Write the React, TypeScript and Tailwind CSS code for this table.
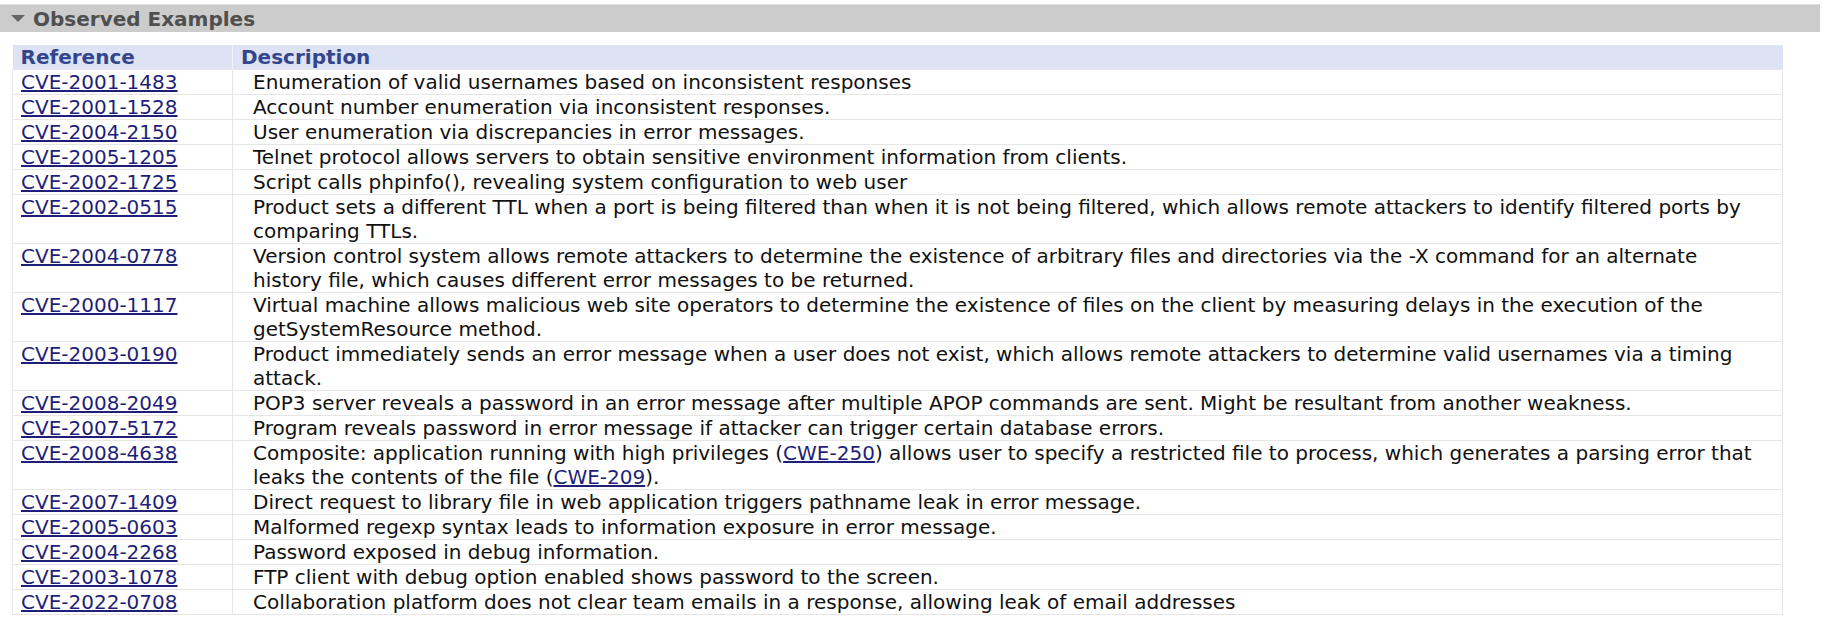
const rows: { id: string; text: React.ReactNode }[] = [
  { id: "CVE-2001-1483", text: "Enumeration of valid usernames based on inconsistent responses" },
  { id: "CVE-2001-1528", text: "Account number enumeration via inconsistent responses." },
  { id: "CVE-2004-2150", text: "User enumeration via discrepancies in error messages." },
  { id: "CVE-2005-1205", text: "Telnet protocol allows servers to obtain sensitive environment information from clients." },
  { id: "CVE-2002-1725", text: "Script calls phpinfo(), revealing system configuration to web user" },
  {
    id: "CVE-2002-0515",
    text: "Product sets a different TTL when a port is being filtered than when it is not being filtered, which allows remote attackers to identify filtered ports by comparing TTLs.",
  },
  {
    id: "CVE-2004-0778",
    text: "Version control system allows remote attackers to determine the existence of arbitrary files and directories via the -X command for an alternate history file, which causes different error messages to be returned.",
  },
  {
    id: "CVE-2000-1117",
    text: "Virtual machine allows malicious web site operators to determine the existence of files on the client by measuring delays in the execution of the getSystemResource method.",
  },
  {
    id: "CVE-2003-0190",
    text: "Product immediately sends an error message when a user does not exist, which allows remote attackers to determine valid usernames via a timing attack.",
  },
  {
    id: "CVE-2008-2049",
    text: "POP3 server reveals a password in an error message after multiple APOP commands are sent. Might be resultant from another weakness.",
  },
  { id: "CVE-2007-5172", text: "Program reveals password in error message if attacker can trigger certain database errors." },
  {
    id: "CVE-2008-4638",
    text: (
      <>
        Composite: application running with high privileges (
        <a href="#" className="text-[#1f1f7a] underline">CWE-250</a>
        ) allows user to specify a restricted file to process, which generates a parsing error that leaks the contents of the file (
        <a href="#" className="text-[#1f1f7a] underline">CWE-209</a>
        ).
      </>
    ),
  },
  { id: "CVE-2007-1409", text: "Direct request to library file in web application triggers pathname leak in error message." },
  { id: "CVE-2005-0603", text: "Malformed regexp syntax leads to information exposure in error message." },
  { id: "CVE-2004-2268", text: "Password exposed in debug information." },
  { id: "CVE-2003-1078", text: "FTP client with debug option enabled shows password to the screen." },
  {
    id: "CVE-2022-0708",
    text: "Collaboration platform does not clear team emails in a response, allowing leak of email addresses",
  },
];

export default function App() {
  return (
    <div className="min-h-[622px] bg-white pt-1 font-['DejaVu_Sans',Verdana,sans-serif] text-[20px]">
      {/* section header bar */}
      <div className="mr-1 flex h-[28px] items-center bg-[#cccccc] border-t border-[#dedede]">
        <svg width="14" height="8" viewBox="0 0 14 8" className="ml-[11px] mr-[8px]">
          <polygon points="0,0 14,0 7,7" fill="#666666" />
        </svg>
        <span className="font-bold leading-[28px] text-[#4f4f4f]">Observed Examples</span>
      </div>

      <div className="ml-[12px] mt-[13px] w-[1771px]">
        <table className="w-full border-collapse">
          <thead>
            <tr className="bg-[#dde3f5]">
              <th className="w-[220px] border-r border-[#eef1fa] pl-2 text-left font-bold leading-[24px] text-[#34468b]">
                Reference
              </th>
              <th className="pl-2 text-left font-bold leading-[24px] text-[#34468b]">Description</th>
            </tr>
          </thead>
          <tbody>
            {rows.map((r) => (
              <tr key={r.id}>
                <td className="border border-[#e6e6e6] pl-2 align-top leading-[24px]">
                  <a href="#" className="text-[#1f1f7a] underline">
                    {r.id}
                  </a>
                </td>
                <td className="border border-[#e6e6e6] pl-5 pr-6 align-top leading-[24px] text-[#111]">
                  {r.text}
                </td>
              </tr>
            ))}
          </tbody>
        </table>
      </div>
    </div>
  );
}
